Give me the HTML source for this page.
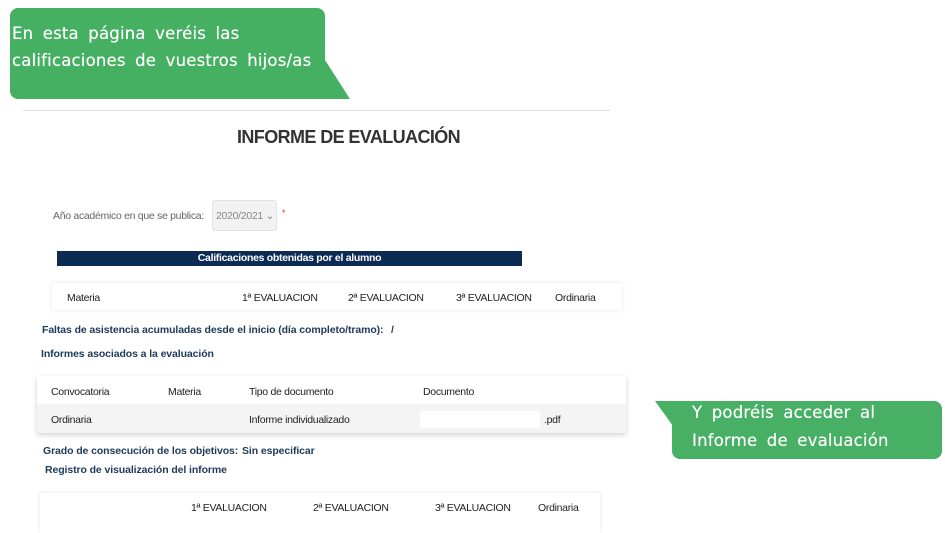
<!DOCTYPE html>
<html><head><meta charset="utf-8"><style>
*{margin:0;padding:0;box-sizing:border-box}
body{width:945px;height:526px;background:#fff;position:relative;overflow:hidden;font-family:"Liberation Sans",sans-serif}
.a{position:absolute;white-space:nowrap}
.g{font-family:"DejaVu Sans","Liberation Sans",sans-serif;color:#fff;font-size:16.5px;letter-spacing:0.2px;word-spacing:4px;font-weight:500;text-shadow:0 0 0.4px #fff}
.s{font-size:10.5px;letter-spacing:-0.3px;color:#222}
.d{font-size:10.5px;letter-spacing:-0.1px;color:#1d3a5a;font-weight:bold}
.card{position:absolute;background:#fff;box-shadow:0 2px 5px rgba(0,0,0,.18)}
</style></head><body>
<div class="a" style="left:10px;top:8px;width:315px;height:91px;background:#45b062;border-radius:8px 8px 0 8px"></div>
<svg class="a" style="left:300px;top:60px" width="60" height="40"><polygon points="25,0 25,39 50,39" fill="#45b062"/></svg>
<div class="a g" style="left:12px;top:24px">En esta página veréis las</div>
<div class="a g" style="left:12px;top:51px">calificaciones de vuestros hijos/as</div>

<div class="a" style="left:23px;top:110px;width:587px;height:1px;background:#ddd"></div>
<div class="a" style="left:237px;top:127px;font-size:18px;font-weight:bold;color:#333;letter-spacing:-0.6px">INFORME DE EVALUACIÓN</div>

<div class="a s" style="left:53px;top:210px;color:#666">Año académico en que se publica:</div>
<div class="a" style="left:212px;top:200px;width:65px;height:31px;background:#f2f2f2;border:1px solid #e2e2e2;border-radius:3px"></div>
<div class="a s" style="left:216px;top:210px;color:#888">2020/2021 ⌄</div>
<div class="a" style="left:282px;top:208px;font-size:9px;color:#e33">*</div>

<div class="a" style="left:57px;top:251px;width:465px;height:15px;background:#0b2b55"></div>
<div class="a" style="left:57px;top:252px;width:465px;text-align:center;font-size:10.5px;font-weight:bold;color:#fff;letter-spacing:-0.3px">Calificaciones obtenidas por el alumno</div>

<div class="card" style="left:52px;top:283px;width:570px;height:27px;box-shadow:0 0 4px rgba(0,0,0,.1)"></div>
<div class="a s" style="left:67px;top:292px">Materia</div>
<div class="a s" style="left:242px;top:292px">1ª EVALUACION</div>
<div class="a s" style="left:348px;top:292px">2ª EVALUACION</div>
<div class="a s" style="left:456px;top:292px">3ª EVALUACION</div>
<div class="a s" style="left:555px;top:292px">Ordinaria</div>

<div class="a d" style="left:42px;top:324px">Faltas de asistencia acumuladas desde el inicio (día completo/tramo):</div>
<div class="a d" style="left:391px;top:324px">/</div>
<div class="a d" style="left:41px;top:348px">Informes asociados a la evaluación</div>

<div class="card" style="left:37px;top:376px;width:589px;height:57px"></div>
<div class="a" style="left:37px;top:404px;width:589px;height:29px;background:#f4f4f4"></div>
<div class="a s" style="left:51px;top:386px">Convocatoria</div>
<div class="a s" style="left:168px;top:386px">Materia</div>
<div class="a s" style="left:249px;top:386px">Tipo de documento</div>
<div class="a s" style="left:423px;top:386px">Documento</div>
<div class="a s" style="left:51px;top:414px">Ordinaria</div>
<div class="a s" style="left:249px;top:414px">Informe individualizado</div>
<div class="a" style="left:420px;top:411px;width:120px;height:17px;background:#fff"></div>
<div class="a s" style="left:544px;top:414px">.pdf</div>

<div class="a d" style="left:43px;top:445px">Grado de consecución de los objetivos:</div>
<div class="a d" style="left:242px;top:445px">Sin especificar</div>
<div class="a d" style="left:45px;top:464px">Registro de visualización del informe</div>

<div class="card" style="left:40px;top:493px;width:560px;height:40px;box-shadow:0 0 4px rgba(0,0,0,.1)"></div>
<div class="a s" style="left:191px;top:502px">1ª EVALUACION</div>
<div class="a s" style="left:313px;top:502px">2ª EVALUACION</div>
<div class="a s" style="left:435px;top:502px">3ª EVALUACION</div>
<div class="a s" style="left:538px;top:502px">Ordinaria</div>

<div class="a" style="left:672px;top:401px;width:270px;height:58px;background:#47b064;border-radius:0 8px 8px 8px"></div>
<svg class="a" style="left:654px;top:401px" width="20" height="26"><polygon points="1,0 19,0 19,25" fill="#47b064"/></svg>
<div class="a g" style="left:692px;top:403px">Y podréis acceder al</div>
<div class="a g" style="left:692px;top:431px">Informe de evaluación</div>
</body></html>
